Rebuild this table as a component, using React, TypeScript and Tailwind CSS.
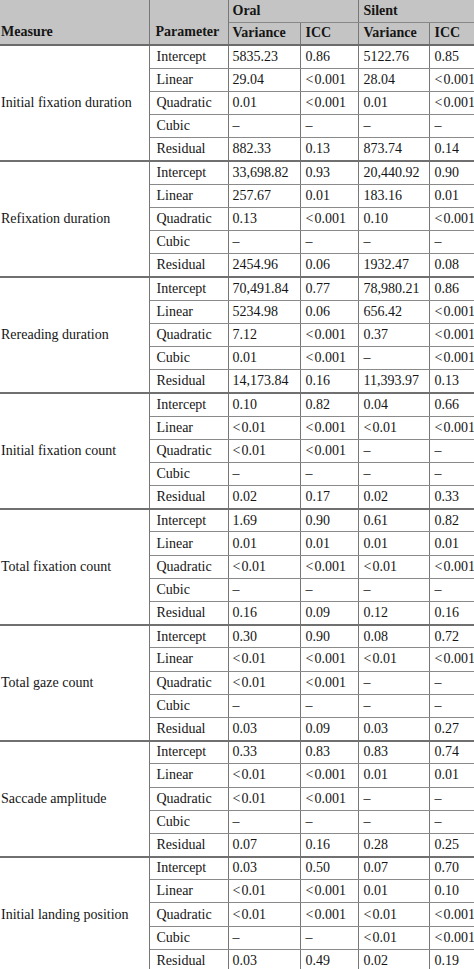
import React from "react";

type Row = [string, string, string, string, string];

const groups: { measure: string; rows: Row[] }[] = [
  {
    measure: "Initial fixation duration",
    rows: [
      ["Intercept", "5835.23", "0.86", "5122.76", "0.85"],
      ["Linear", "29.04", "<0.001", "28.04", "<0.001"],
      ["Quadratic", "0.01", "<0.001", "0.01", "<0.001"],
      ["Cubic", "–", "–", "–", "–"],
      ["Residual", "882.33", "0.13", "873.74", "0.14"],
    ],
  },
  {
    measure: "Refixation duration",
    rows: [
      ["Intercept", "33,698.82", "0.93", "20,440.92", "0.90"],
      ["Linear", "257.67", "0.01", "183.16", "0.01"],
      ["Quadratic", "0.13", "<0.001", "0.10", "<0.001"],
      ["Cubic", "–", "–", "–", "–"],
      ["Residual", "2454.96", "0.06", "1932.47", "0.08"],
    ],
  },
  {
    measure: "Rereading duration",
    rows: [
      ["Intercept", "70,491.84", "0.77", "78,980.21", "0.86"],
      ["Linear", "5234.98", "0.06", "656.42", "<0.001"],
      ["Quadratic", "7.12", "<0.001", "0.37", "<0.001"],
      ["Cubic", "0.01", "<0.001", "–", "<0.001"],
      ["Residual", "14,173.84", "0.16", "11,393.97", "0.13"],
    ],
  },
  {
    measure: "Initial fixation count",
    rows: [
      ["Intercept", "0.10", "0.82", "0.04", "0.66"],
      ["Linear", "<0.01", "<0.001", "<0.01", "<0.001"],
      ["Quadratic", "<0.01", "<0.001", "–", "–"],
      ["Cubic", "–", "–", "–", "–"],
      ["Residual", "0.02", "0.17", "0.02", "0.33"],
    ],
  },
  {
    measure: "Total fixation count",
    rows: [
      ["Intercept", "1.69", "0.90", "0.61", "0.82"],
      ["Linear", "0.01", "0.01", "0.01", "0.01"],
      ["Quadratic", "<0.01", "<0.001", "<0.01", "<0.001"],
      ["Cubic", "–", "–", "–", "–"],
      ["Residual", "0.16", "0.09", "0.12", "0.16"],
    ],
  },
  {
    measure: "Total gaze count",
    rows: [
      ["Intercept", "0.30", "0.90", "0.08", "0.72"],
      ["Linear", "<0.01", "<0.001", "<0.01", "<0.001"],
      ["Quadratic", "<0.01", "<0.001", "–", "–"],
      ["Cubic", "–", "–", "–", "–"],
      ["Residual", "0.03", "0.09", "0.03", "0.27"],
    ],
  },
  {
    measure: "Saccade amplitude",
    rows: [
      ["Intercept", "0.33", "0.83", "0.83", "0.74"],
      ["Linear", "<0.01", "<0.001", "0.01", "0.01"],
      ["Quadratic", "<0.01", "<0.001", "–", "–"],
      ["Cubic", "–", "–", "–", "–"],
      ["Residual", "0.07", "0.16", "0.28", "0.25"],
    ],
  },
  {
    measure: "Initial landing position",
    rows: [
      ["Intercept", "0.03", "0.50", "0.07", "0.70"],
      ["Linear", "<0.01", "<0.001", "0.01", "0.10"],
      ["Quadratic", "<0.01", "<0.001", "<0.01", "<0.001"],
      ["Cubic", "–", "–", "<0.01", "<0.001"],
      ["Residual", "0.03", "0.49", "0.02", "0.19"],
    ],
  },
];

// "<0.001" is typeset with a little space after the sign
function Val({ v }: { v: string }) {
  if (v.startsWith("<")) {
    return (
      <span>
        <span className="mr-[1px]">&lt;</span>
        {v.slice(1)}
      </span>
    );
  }
  return <span>{v}</span>;
}

export default function App() {
  return (
    <div
      className="w-[474px] h-[969px] overflow-hidden bg-white text-[#151515] text-[14px] leading-none"
      style={{ fontFamily: '"Liberation Serif", "Times New Roman", serif' }}
    >
      <table className="w-[474px] table-fixed border-collapse">
        <colgroup>
          <col className="w-[149px]" />
          <col className="w-[79px]" />
          <col className="w-[72px]" />
          <col className="w-[58px]" />
          <col className="w-[71px]" />
          <col className="w-[45px]" />
        </colgroup>
        <thead className="bg-[#c4c4c4] font-bold">
          <tr className="h-[22px]">
            <th rowSpan={2} className="align-bottom text-left pl-[1px] pb-[5px] border-b-2 border-b-[#6b6b6b] border-r border-r-[#777]">
              Measure
            </th>
            <th rowSpan={2} className="align-bottom text-left pl-[6px] pb-[5px] border-b-2 border-b-[#6b6b6b] border-r border-r-[#777]">
              Parameter
            </th>
            <th colSpan={2} className="text-left pl-[4px] border-b border-b-[#888] border-r border-r-[#777]">
              Oral
            </th>
            <th colSpan={2} className="text-left pl-[5px] border-b border-b-[#888]">
              Silent
            </th>
          </tr>
          <tr className="h-[23px]">
            <th className="text-left pl-[4px] border-b-2 border-b-[#6b6b6b] border-r border-r-[#777]">Variance</th>
            <th className="text-left pl-[5px] border-b-2 border-b-[#6b6b6b] border-r border-r-[#777]">ICC</th>
            <th className="text-left pl-[5px] border-b-2 border-b-[#6b6b6b] border-r border-r-[#777]">Variance</th>
            <th className="text-left pl-[5px] border-b-2 border-b-[#6b6b6b]">ICC</th>
          </tr>
        </thead>
        <tbody>
          {groups.map((g, gi) =>
            g.rows.map((r, ri) => {
              const last = ri === g.rows.length - 1;
              const rb = last ? "border-b-2 border-b-[#707070]" : "border-b border-b-[#8a8a8a]";
              return (
                <tr key={`${gi}-${ri}`} className="h-[23.2px]">
                  {ri === 0 && (
                    <td
                      rowSpan={g.rows.length}
                      className="align-middle text-left pl-[1px] border-b-2 border-b-[#707070] border-r border-r-[#777]"
                    >
                      {g.measure}
                    </td>
                  )}
                  <td className={`pl-[7px] border-r border-r-[#777] ${rb}`}>{r[0]}</td>
                  <td className={`pl-[4px] border-r border-r-[#777] ${rb}`}>
                    <Val v={r[1]} />
                  </td>
                  <td className={`pl-[5px] border-r border-r-[#777] ${rb}`}>
                    <Val v={r[2]} />
                  </td>
                  <td className={`pl-[5px] border-r border-r-[#777] ${rb}`}>
                    <Val v={r[3]} />
                  </td>
                  <td className={`pl-[5px] ${rb}`}>
                    <Val v={r[4]} />
                  </td>
                </tr>
              );
            })
          )}
        </tbody>
      </table>
    </div>
  );
}
